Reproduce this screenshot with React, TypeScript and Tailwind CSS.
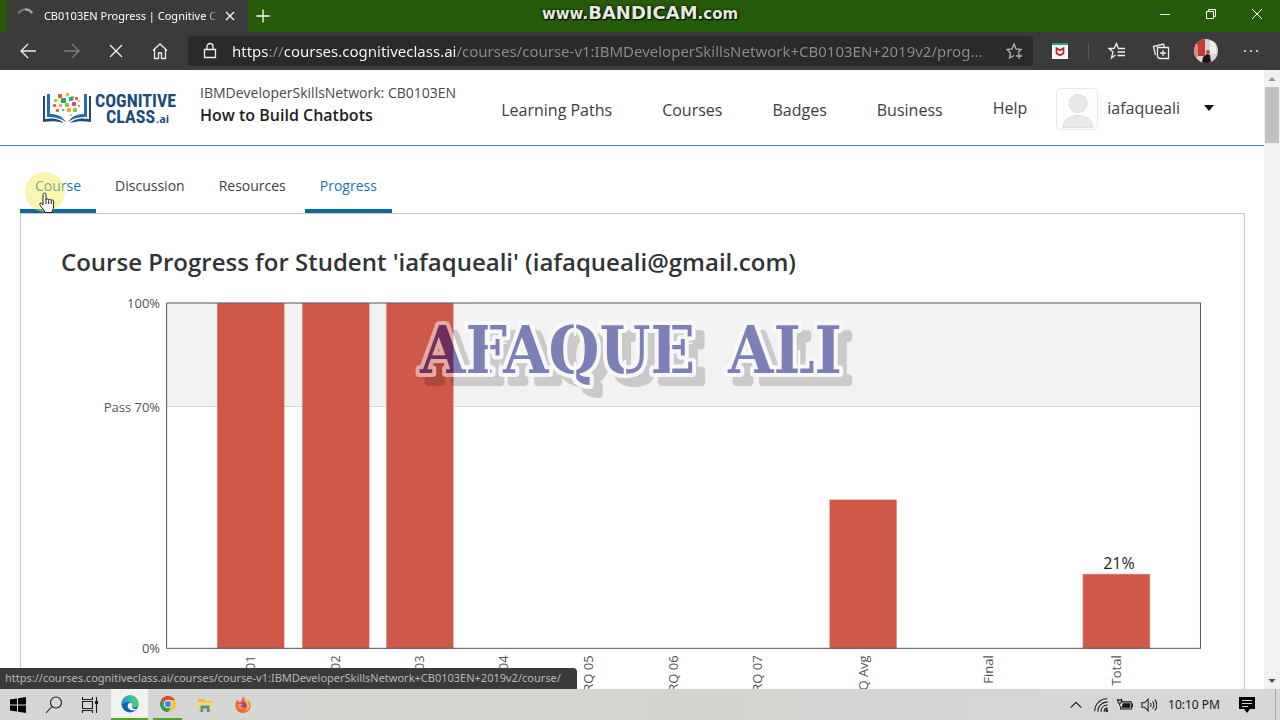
import type { ReactNode } from "react";

const NAV_LINKS = ["Learning Paths", "Courses", "Badges", "Business"] as const;

const TABS = [
  { label: "Course", color: "text-[#1d74b0]", border: "border-[#0b65a6]" },
  { label: "Discussion", color: "text-[#3c3f42]", border: "border-transparent" },
  { label: "Resources", color: "text-[#3c3f42]", border: "border-transparent" },
  { label: "Progress", color: "text-[#1d74b0]", border: "border-[#0b65a6]" },
] as const;

// x is the centre of the bar inside the chart, score is 0..1
const SCORES = [
  { label: "RQ 01", x: 190, score: 1 },
  { label: "RQ 02", x: 275, score: 1 },
  { label: "RQ 03", x: 359, score: 1 },
  { label: "RQ 04", x: 443, score: 0 },
  { label: "RQ 05", x: 528, score: 0 },
  { label: "RQ 06", x: 612, score: 0 },
  { label: "RQ 07", x: 696, score: 0 },
  { label: "RQ Avg", x: 802, score: 0.43 },
  { label: "Final", x: 927, score: 0 },
  { label: "Total", x: 1055, score: 0.215 },
] as const;

const LOGO_DOTS = [
  { x: 16, y: 3, s: 4, fill: "#e8542f" },
  { x: 24, y: 2, s: 3, fill: "#f2a03a" },
  { x: 29, y: 5, s: 3, fill: "#8dc63f" },
  { x: 12, y: 8, s: 3, fill: "#8dc63f" },
  { x: 19, y: 7, s: 5, fill: "#27a55b" },
  { x: 27, y: 6, s: 4, fill: "#1fa0b5" },
  { x: 33, y: 6, s: 3, fill: "#e8542f" },
  { x: 36, y: 9, s: 2, fill: "#8dc63f" },
  { x: 11, y: 13, s: 3, fill: "#e8542f" },
  { x: 17, y: 13, s: 3, fill: "#f2a03a" },
  { x: 23, y: 12, s: 4, fill: "#8dc63f" },
  { x: 30, y: 11, s: 4, fill: "#d9418d" },
  { x: 14, y: 18, s: 3, fill: "#e8542f" },
  { x: 20, y: 18, s: 2, fill: "#1fa0b5" },
  { x: 25, y: 17, s: 4, fill: "#f2a03a" },
  { x: 31, y: 17, s: 4, fill: "#8dc63f" },
  { x: 36, y: 14, s: 2, fill: "#e8542f" },
  { x: 28, y: 23, s: 2, fill: "#f2a03a" },
] as const;

function Line({ size = 18, width = 1.3, children }: { size?: number; width?: number; children: ReactNode }) {
  return (
    <svg width={size} height={size} viewBox="0 0 18 18" fill="none" stroke="currentColor" strokeWidth={width} aria-hidden="true">
      {children}
    </svg>
  );
}

function TitleBar() {
  return (
    <div className="relative flex h-8 shrink-0 items-stretch bg-[#265b09] text-white">
      <div className="ml-[7px] flex w-[241px] items-center bg-[#3b3b3b] pl-2 pr-1">
        <Line size={20} width={2}>
          <path d="M3 7a7.5 7.5 0 0 1 6-4" stroke="#777" />
          <path d="M9 3a7.5 7.5 0 0 1 6.500 3.500" stroke="#aaa" />
        </Line>
        <span className="ml-[9px] w-[173px] overflow-hidden whitespace-nowrap font-['Noto_Sans'] text-[11px] [mask-image:linear-gradient(90deg,#000_162px,transparent_175px)]">
          CB0103EN Progress | Cognitive C
        </span>
        <button aria-label="Close tab" className="ml-auto flex w-7 justify-center">
          <Line size={16}>
            <path d="M4.500 4.500l9 9M13.500 4.500l-9 9" />
          </Line>
        </button>
      </div>
      <button aria-label="New tab" className="ml-[6px] pb-px">
        <Line>
          <path d="M9 2.500v13M2.500 9h13" />
        </Line>
      </button>
      {/* Recorder watermark */}
      <div className="absolute left-1/2 top-[1px] flex -translate-x-1/2 items-baseline whitespace-nowrap font-['DejaVu_Sans'] text-[15px] font-bold leading-6 text-[#e3eadf] [text-shadow:0_0_3px_#000,1px_1px_1px_#000]">
        <span>www.</span>
        <span className="text-[18px]">BANDICAM</span>
        <span>.com</span>
      </div>
      <div className="ml-auto flex items-center gap-7 pr-[14px]">
        <button aria-label="Minimize" className="-mt-1">
          <Line width={1}>
            <path d="M4 9.500h10" />
          </Line>
        </button>
        <button aria-label="Restore" className="-mt-1">
          <Line width={1}>
            <path d="M4.500 6.500h7v7h-7zM6.500 6.500v-2h7v7h-2" />
          </Line>
        </button>
        <button aria-label="Close" className="-mt-1">
          <Line width={1}>
            <path d="M4 4l10 10M14 4L4 14" />
          </Line>
        </button>
      </div>
    </div>
  );
}

function Toolbar() {
  return (
    <div className="flex h-[38px] shrink-0 items-center bg-[#3b3b3b] pl-[19px] pr-5 text-[#f0f0f0]">
      <div className="flex w-[169px] items-center gap-[26px]">
        <button aria-label="Back">
          <Line>
            <path d="M17 9H2M9 2L2 9l7 7" />
          </Line>
        </button>
        <button aria-label="Forward" className="text-[#7c7c7c]">
          <Line>
            <path d="M1 9h15M9 2l7 7-7 7" />
          </Line>
        </button>
        <button aria-label="Stop">
          <Line>
            <path d="M3 3l12 12M15 3L3 15" />
          </Line>
        </button>
        <button aria-label="Home">
          <Line>
            <path d="M2 8.500L9 2l7 6.500M3.500 7.500V16.500h4V11h3v5.500h4V7.500" />
          </Line>
        </button>
      </div>
      <div className="flex h-[30px] min-w-0 flex-1 items-center rounded bg-[#2a2a2a] pl-[13px] pr-[10px]">
        <Line>
          <path d="M3.500 7.500h11v8h-11zM6 7.500V4.500a3 3 0 0 1 6 0v3" />
        </Line>
        <input
          aria-label="Address"
          readOnly
          value="https://courses.cognitiveclass.ai/courses/course-v1:IBMDeveloperSkillsNetwork+CB0103EN+2019v2/prog..."
          className="ml-[13px] min-w-0 flex-1 bg-[linear-gradient(90deg,#fff_37px,#8d8d8d_37px_52px,#fff_52px_225px,#8d8d8d_225px)] bg-clip-text font-['Noto_Sans'] text-[15px] text-transparent outline-none"
        />
        <button aria-label="Add to favorites" className="ml-2 text-[#b5b5b5]">
          <Line>
            <path d="M9 13.500l-4.500 2.500 1-5L2 7.500l5-.7L9 2l2 4.800 5 .7-3 3M14 11v6M11 14h6" />
          </Line>
        </button>
      </div>
      <div className="ml-[18px] flex items-center">
        <button aria-label="McAfee WebAdvisor">
          <svg width="18" height="18" viewBox="0 0 18 18" aria-hidden="true">
            <path d="M1 1h16v16H1z" fill="#f7f7f7" />
            <path d="M1 1h16v2H1z" fill="#26a67a" />
            <path d="M5.500 6.200l3.500 2 3.500-2v5.300L9 13.300l-3.500-1.800z" fill="none" stroke="#b5232b" strokeWidth="1.700" />
          </svg>
        </button>
        <span className="mx-[19px] h-4 w-px bg-[#5a5a5a]" />
        <button aria-label="Favorites">
          <Line>
            <path d="M7.500 13L3.500 16l1.500-6L1 6.500h5L8.500 1.500l2 5H17M9.500 10H17M9.500 13.500H17" />
          </Line>
        </button>
        <button aria-label="Collections" className="ml-[26px]">
          <Line>
            <path d="M5.500 5.500h11v11h-8a3 3 0 0 1-3-3zM11 8v6M8 11h6M3.500 13L1.500 4.500l10-2.500.8 3" />
          </Line>
        </button>
        <button aria-label="Profile" className="ml-6">
          <svg width="24" height="24" viewBox="0 0 24 24" aria-hidden="true">
            <clipPath id="face">
              <circle cx="12" cy="12" r="12" />
            </clipPath>
            <g clipPath="url(#face)">
              <path d="M0 0h24v24H0z" fill="#d9d2d0" />
              <path d="M3 0h8v17H3z" fill="#c8382f" />
              <path d="M0 6h4v12H0z" fill="#d98d80" />
              <path d="M16 2h6v13h-6z" fill="#eeedeb" />
              <circle cx="14" cy="13" r="2" fill="#8b5b49" />
              <path d="M8 24l1-6 4-3 3 1 1 8z" fill="#161414" />
            </g>
          </svg>
        </button>
        <button aria-label="Settings and more" className="ml-6">
          <svg width="18" height="18" viewBox="0 0 18 18" fill="currentColor" aria-hidden="true">
            <circle cx="3" cy="9" r="1" />
            <circle cx="9" cy="9" r="1" />
            <circle cx="15" cy="9" r="1" />
          </svg>
        </button>
      </div>
    </div>
  );
}

function Logo() {
  return (
    <a href="#home" aria-label="Cognitive Class" className="flex items-center text-[#1c4c78]">
      <svg width="50" height="34" viewBox="0 0 50 34" aria-hidden="true">
        <path d="M1 5h2v23c7-1 13-1 19 4C15 30 8 30 1 31z" fill="#1c4c78" />
        <path d="M49 5h-2v23c-7-1-13-1-19 4 7-2 14-2 21-1z" fill="#1c4c78" />
        <path d="M5 3h3v20c7 0 12 2 16 8C18 27 12 26 5 26z" fill="#2b6ea6" />
        <path d="M45 3h-3v20c-7 0-12 2-16 8 6-4 12-5 19-5z" fill="#2b6ea6" />
        <path d="M14 10l8-5 9 3 5 6-7 6-10-2-6-4 8-4 9 4" fill="none" stroke="#c9d5a5" strokeWidth="0.600" />
        {LOGO_DOTS.map((d) => (
          <rect key={`${d.x}-${d.y}`} x={d.x} y={d.y} width={d.s} height={d.s} rx="1" fill={d.fill} />
        ))}
      </svg>
      <svg width="88" height="38" viewBox="0 0 88 38" fill="currentColor" fontFamily="'Liberation Sans Narrow', 'Roboto Condensed', sans-serif" fontWeight="700" aria-hidden="true">
        <text x="3" y="18" fontSize="18">COGNITIVE</text>
        <text x="14" y="34" fontSize="18">CLASS</text>
        <text x="64" y="34" fontSize="11" fontFamily="'Open Sans', sans-serif">.ai</text>
      </svg>
    </a>
  );
}

function CourseHeader() {
  return (
    <header className="flex h-[76px] items-center border-b border-[#5b92ac] pl-[42px] pr-[50px] shadow-[0_2px_3px_#e8f4fa]">
      <Logo />
      <div className="ml-5 whitespace-nowrap pb-[7px]">
        <p className="text-[14px] leading-[22px] text-[#45494d]">IBMDeveloperSkillsNetwork: CB0103EN</p>
        <p className="text-[16px] font-semibold leading-[22px] text-[#1d1f21]">How to Build Chatbots</p>
      </div>
      <nav className="ml-auto flex items-center gap-[50px] whitespace-nowrap pt-1 text-[16px] text-[#3a4045]">
        {NAV_LINKS.map((link) => (
          <a key={link} href="#nav">
            {link}
          </a>
        ))}
      </nav>
      <a href="#help" className="ml-[50px] text-[16px] text-[#3a4045]">
        Help
      </a>
      <button className="ml-[29px] flex items-center whitespace-nowrap text-[16px] text-[#3a4045]">
        <svg width="42" height="42" viewBox="0 0 42 42" className="mt-[2px]" aria-hidden="true">
          <rect x="0.500" y="0.500" width="41" height="41" rx="4" fill="#fdfdfd" stroke="#e6e6e6" />
          <circle cx="22" cy="15.500" r="9" fill="#e9e9e9" stroke="#dedede" />
          <path d="M6.500 39.500c1-8 8-12 15.500-12s14 4 15 12z" fill="#e9e9e9" stroke="#dedede" />
        </svg>
        <span className="ml-[9px]">iafaqueali</span>
        <svg width="10" height="6" viewBox="0 0 10 6" className="ml-6" aria-hidden="true">
          <path d="M0 0h10L5 6z" fill="#111" />
        </svg>
      </button>
    </header>
  );
}

function ProgressChart() {
  return (
    <svg viewBox="0 0 1142 440" className="block w-full" fontFamily="'Open Sans', sans-serif" role="img" aria-label="Course progress chart">
      <rect x="105" y="13" width="1034" height="104" fill="#f2f2f2" />
      <path d="M105 116.500h1034" stroke="#d4d4d4" />
      {SCORES.filter((s) => s.score > 0).map((s) => (
        <rect key={s.label} x={s.x - 34} y={358 - s.score * 345} width="67" height={s.score * 345} fill="#d05849" stroke="#e3a79f" strokeWidth="0.500" />
      ))}
      <rect x="105.500" y="13" width="1033" height="345" fill="none" stroke="#545454" />
      <g fontSize="13" fill="#545454" textAnchor="end">
        <text x="99" y="18">100%</text>
        <text x="99" y="122">Pass 70%</text>
        <text x="99" y="363">0%</text>
        {SCORES.map((s) => (
          <text key={s.label} transform={`translate(${s.x + 4} 365) rotate(-90)`}>
            {s.label}
          </text>
        ))}
      </g>
      <text x="1057" y="279" fontSize="16" fill="#222" textAnchor="middle">21%</text>
    </svg>
  );
}

function Watermark() {
  return (
    <svg
      width="460"
      height="90"
      viewBox="0 0 460 90"
      className="pointer-events-none absolute left-[412px] top-[240px]"
      fontFamily="'DejaVu Serif Condensed', 'DejaVu Serif', serif"
      fontWeight="700"
      fontSize="65"
      aria-hidden="true"
    >
      <g opacity="0.480">
        <g className="drop-shadow-[9px_9px_0_rgba(0,0,0,0.35)]">
          <g fill="#000479" stroke="#fff" strokeWidth="8" strokeLinejoin="round" paintOrder="stroke">
            <text x="8" y="63">AFAQUE</text>
            <text x="316" y="63">ALI</text>
          </g>
          {/* Stencil bridges */}
          <path
            d="M77 12v54M163 12v14M163 52v22M213 50v16M259 12v54M387 40v26"
            stroke="#fff"
            strokeWidth="2.500"
            fill="none"
          />
        </g>
      </g>
    </svg>
  );
}

function Cursor() {
  return (
    <div className="pointer-events-none absolute left-[25px] top-[102px] size-10 rounded-full bg-[#f0ec50]/45">
      <svg width="18" height="22" viewBox="0 0 18 22" className="ml-[13px] mt-5" aria-hidden="true">
        <path
          d="M5 13V2.500c0-2 3-2 3 0V8c0-1.500 2.600-1.500 2.700.3 0-1.300 2.500-1.300 2.600.5 0-1.200 2.300-1.200 2.300.6V15c0 2-1.600 3-1.600 5.500H7c0-2-3-4-5-7.500-1-2 1-3 3 0z"
          fill="#fff"
          stroke="#222"
        />
        <path d="M8 8v4M10.700 8.500V12M13.300 9v3" stroke="#222" />
      </svg>
    </div>
  );
}

function Scrollbar() {
  return (
    <div className="flex w-4 shrink-0 flex-col items-center bg-[#f1f1f1]">
      <svg width="16" height="17" viewBox="0 0 16 17" aria-hidden="true">
        <path d="M4.500 11L8 7l3.500 4z" fill="#8e8e8e" />
      </svg>
      <div className="h-14 w-[14px] bg-[#c1c1c1]" />
      <svg width="16" height="17" viewBox="0 0 16 17" className="mt-auto" aria-hidden="true">
        <path d="M4.500 7L8 11l3.500-4z" fill="#505050" />
      </svg>
    </div>
  );
}

function EdgeIcon() {
  return (
    <svg width="18" height="18" viewBox="0 0 18 18" aria-hidden="true">
      <defs>
        <linearGradient id="edgeTop" x1="0" y1="0.500" x2="1" y2="0.500">
          <stop offset="0" stopColor="#2399d6" />
          <stop offset="0.550" stopColor="#2fc0b0" />
          <stop offset="1" stopColor="#5fd05a" />
        </linearGradient>
      </defs>
      <circle cx="9" cy="9" r="8.500" fill="#0f62b4" />
      <path d="M.5 9A8.500 8.500 0 0 1 17.500 8.500c0 3-2.500 4-4.500 4s-2.500-.8-1.800-1.700C12 8 9 6.500 6.500 7 3 7.500 1 9 .5 11z" fill="url(#edgeTop)" />
      <path d="M7.500 8.500c-2.500 4 1 8 7 6.500l2-1.200c-3 .9-5.300-.3-5.600-2.300-.2-1.200.6-1.500.3-2.500-.5-1.500-2.700-1.800-3.700-.5z" fill="#f2f5f2" />
    </svg>
  );
}

function ChromeIcon() {
  return (
    <svg width="18" height="18" viewBox="0 0 18 18" aria-hidden="true">
      <circle cx="9" cy="9" r="8" fill="#f6c52c" />
      <path d="M2.070 5A8 8 0 0 1 15.930 5H9a4 4 0 0 0-3.460 6z" fill="#dd4b3e" />
      <path d="M2.070 5A8 8 0 0 0 9 17l3.460-6A4 4 0 0 1 5.540 11z" fill="#2f9e55" />
      <circle cx="9" cy="9" r="4" fill="#f4f4f4" />
      <circle cx="9" cy="9" r="3.100" fill="#4285e8" />
    </svg>
  );
}

function FolderIcon() {
  return (
    <svg width="18" height="18" viewBox="0 0 18 18" aria-hidden="true">
      <path d="M2 3h6l1.500 2H16v10H2z" fill="#f3b93a" />
      <path d="M2 6h14v8H2z" fill="#fbd768" />
      <path d="M4.500 9.500h9V16h-2.500v-3.500H7V16H4.500z" fill="#3e8fc4" />
    </svg>
  );
}

function FirefoxIcon() {
  return (
    <svg width="18" height="18" viewBox="0 0 18 18" aria-hidden="true">
      <path d="M9.500 1c3 1.500 3.500 3 3.700 3.800L15 5c2 3 2 6 .5 8.500A8 8 0 0 1 9 17c-5 0-8-4-7.500-8.500C1.700 6 3 4 3.500 3.500L4.500 6l3-.5C7.500 3.500 8.500 2 9.500 1z" fill="#f8603a" />
      <path d="M10 1c3 1.500 3.500 3 3.700 4 2 2 2.500 5 1.300 7-1 2-3 3-5 3 3-2 4-4 3-6.500C12 6 9.500 5 10 1z" fill="#ffc234" />
      <circle cx="9" cy="9.500" r="3.200" fill="#7a45c9" />
      <path d="M3.500 8c2-1 4 0 5.500 0-.5 1.500-2 1.500-2 2.500 1.500 2 4 1 5 .5-1 3-6.500 3.500-8 .5z" fill="#ff8a2a" />
    </svg>
  );
}

function Taskbar() {
  return (
    <div className="flex h-[31px] shrink-0 items-stretch bg-[linear-gradient(90deg,#d5d6d8,#d6d6cf_45%,#d4d5cf_55%,#d6d6d6_70%,#d7d7d7)] text-[#1a1a1a]">
      <button aria-label="Start" className="flex w-9 items-center justify-center">
        <svg width="18" height="18" viewBox="0 0 18 18" aria-hidden="true">
          <path d="M1 3.500l7-1v6H1zM9 2.300L17 1v7.500H9zM1 9.500h7v6l-7-1zM9 9.500h8V17l-8-1.300z" fill="#000" />
        </svg>
      </button>
      <button aria-label="Search" className="flex w-9 items-center justify-center">
        <Line width={1.1}>
          <circle cx="11" cy="6.500" r="5.500" />
          <path d="M7 10.500L1 17" />
        </Line>
      </button>
      <button aria-label="Task view" className="flex w-[39px] items-center justify-center pr-1">
        <Line width={1.1}>
          <path d="M1.500 1v2.500h10V1M1.500 5.500h10v7h-10zM1.500 17v-2.500h10V17M15.500 1v4M15.500 8v9" />
          <path d="M14.500 5.500h2v2h-2z" fill="currentColor" />
        </Line>
      </button>
      <button aria-label="Microsoft Edge" className="flex w-[37px] items-center justify-center border-b-2 border-[#4fa428] bg-[#f1f3f1]">
        <EdgeIcon />
      </button>
      <button aria-label="Google Chrome" className="ml-[5px] flex w-[29px] items-center justify-center border-b-2 border-[#4fa428]">
        <ChromeIcon />
      </button>
      <button aria-label="File Explorer" className="ml-1 flex w-[38px] items-center justify-center">
        <FolderIcon />
      </button>
      <button aria-label="Firefox" className="flex w-[38px] items-center justify-center">
        <FirefoxIcon />
      </button>
      <div className="ml-auto flex items-center pr-1">
        <button aria-label="Show hidden icons">
          <Line size={16}>
            <path d="M3 12l6-6 6 6" />
          </Line>
        </button>
        <button aria-label="Network" className="ml-[9px]">
          <Line size={16} width={1.2}>
            <path d="M2 16C2 8 8 2 16 2M5.500 16.500C5.500 10 10 5.500 16.500 5.500M9 16.500C9 12 12 9 16.500 9M12.500 16.500c0-2.500 1.500-4 4-4" />
            <circle cx="15.500" cy="15.500" r="1" fill="currentColor" />
          </Line>
        </button>
        <button aria-label="Battery" className="ml-2">
          <Line size={16} width={1.2}>
            <path d="M5 5.500h11v8H4v-3M16.500 8h1v3h-1M1 2v3c0 3 4 3 4 0V2M0 3.500h6M3 7v3" />
            <path d="M7 7.500h7v4H6z" fill="currentColor" />
          </Line>
        </button>
        <button aria-label="Volume" className="ml-2">
          <Line size={16} width={1.2}>
            <path d="M1 6.500h3l4-4v13l-4-4H1zM10.500 7c1 1 1 3 0 4M13 5c2 2 2 6 0 8M15.500 3c3 3 3 9 0 12" />
          </Line>
        </button>
        <span className="ml-[11px] whitespace-nowrap font-['Noto_Sans'] text-[12px]">10:10 PM</span>
        <button aria-label="Notifications" className="ml-[19px]">
          <svg width="16" height="17" viewBox="0 0 16 17" aria-hidden="true">
            <path d="M0 1h16v12h-5l-3 4-3-4H0z" fill="#000" />
            <path d="M3 4.500h10M3 7.500h10M3 10.500h6" stroke="#d7d7d7" />
          </svg>
        </button>
        <span className="ml-5 h-[31px] w-px bg-[#a5a5a5]" />
      </div>
    </div>
  );
}

export default function App() {
  return (
    <div className="flex h-screen flex-col overflow-hidden bg-white font-['Open_Sans',sans-serif]">
      <TitleBar />
      <Toolbar />
      <div className="relative flex min-h-0 flex-1 overflow-hidden">
        <div className="min-w-0 flex-1 overflow-hidden">
          <CourseHeader />
          <nav className="ml-5 mt-3 flex gap-1">
            {TABS.map((tab) => (
              <a key={tab.label} href="#tab" className={`border-b-4 px-[15px] pb-[13px] pt-[17px] text-[14px] leading-[21px] ${tab.color} ${tab.border}`}>
                {tab.label}
              </a>
            ))}
          </nav>
          <main className="ml-5 mr-[19px] border border-[#c8c8c8] px-10 pt-[30px]">
            <h1 className="text-[24px] font-semibold leading-9 text-[#313437]">
              Course Progress for Student 'iafaqueali' (iafaqueali@gmail.com)
            </h1>
            <div className="mt-[10px]">
              <ProgressChart />
            </div>
          </main>
        </div>
        <Scrollbar />
        <Watermark />
        <Cursor />
        {/* Link target shown while hovering */}
        <div className="absolute bottom-0 left-0 h-[21px] whitespace-nowrap rounded-tr bg-[#3a3a3a] pl-[5px] pr-4 font-['Noto_Sans'] text-[11px] leading-5 text-[#b8b8b8]">
          https://courses.cognitiveclass.ai/courses/course-v1:IBMDeveloperSkillsNetwork+CB0103EN+2019v2/course/
        </div>
      </div>
      <Taskbar />
    </div>
  );
}
